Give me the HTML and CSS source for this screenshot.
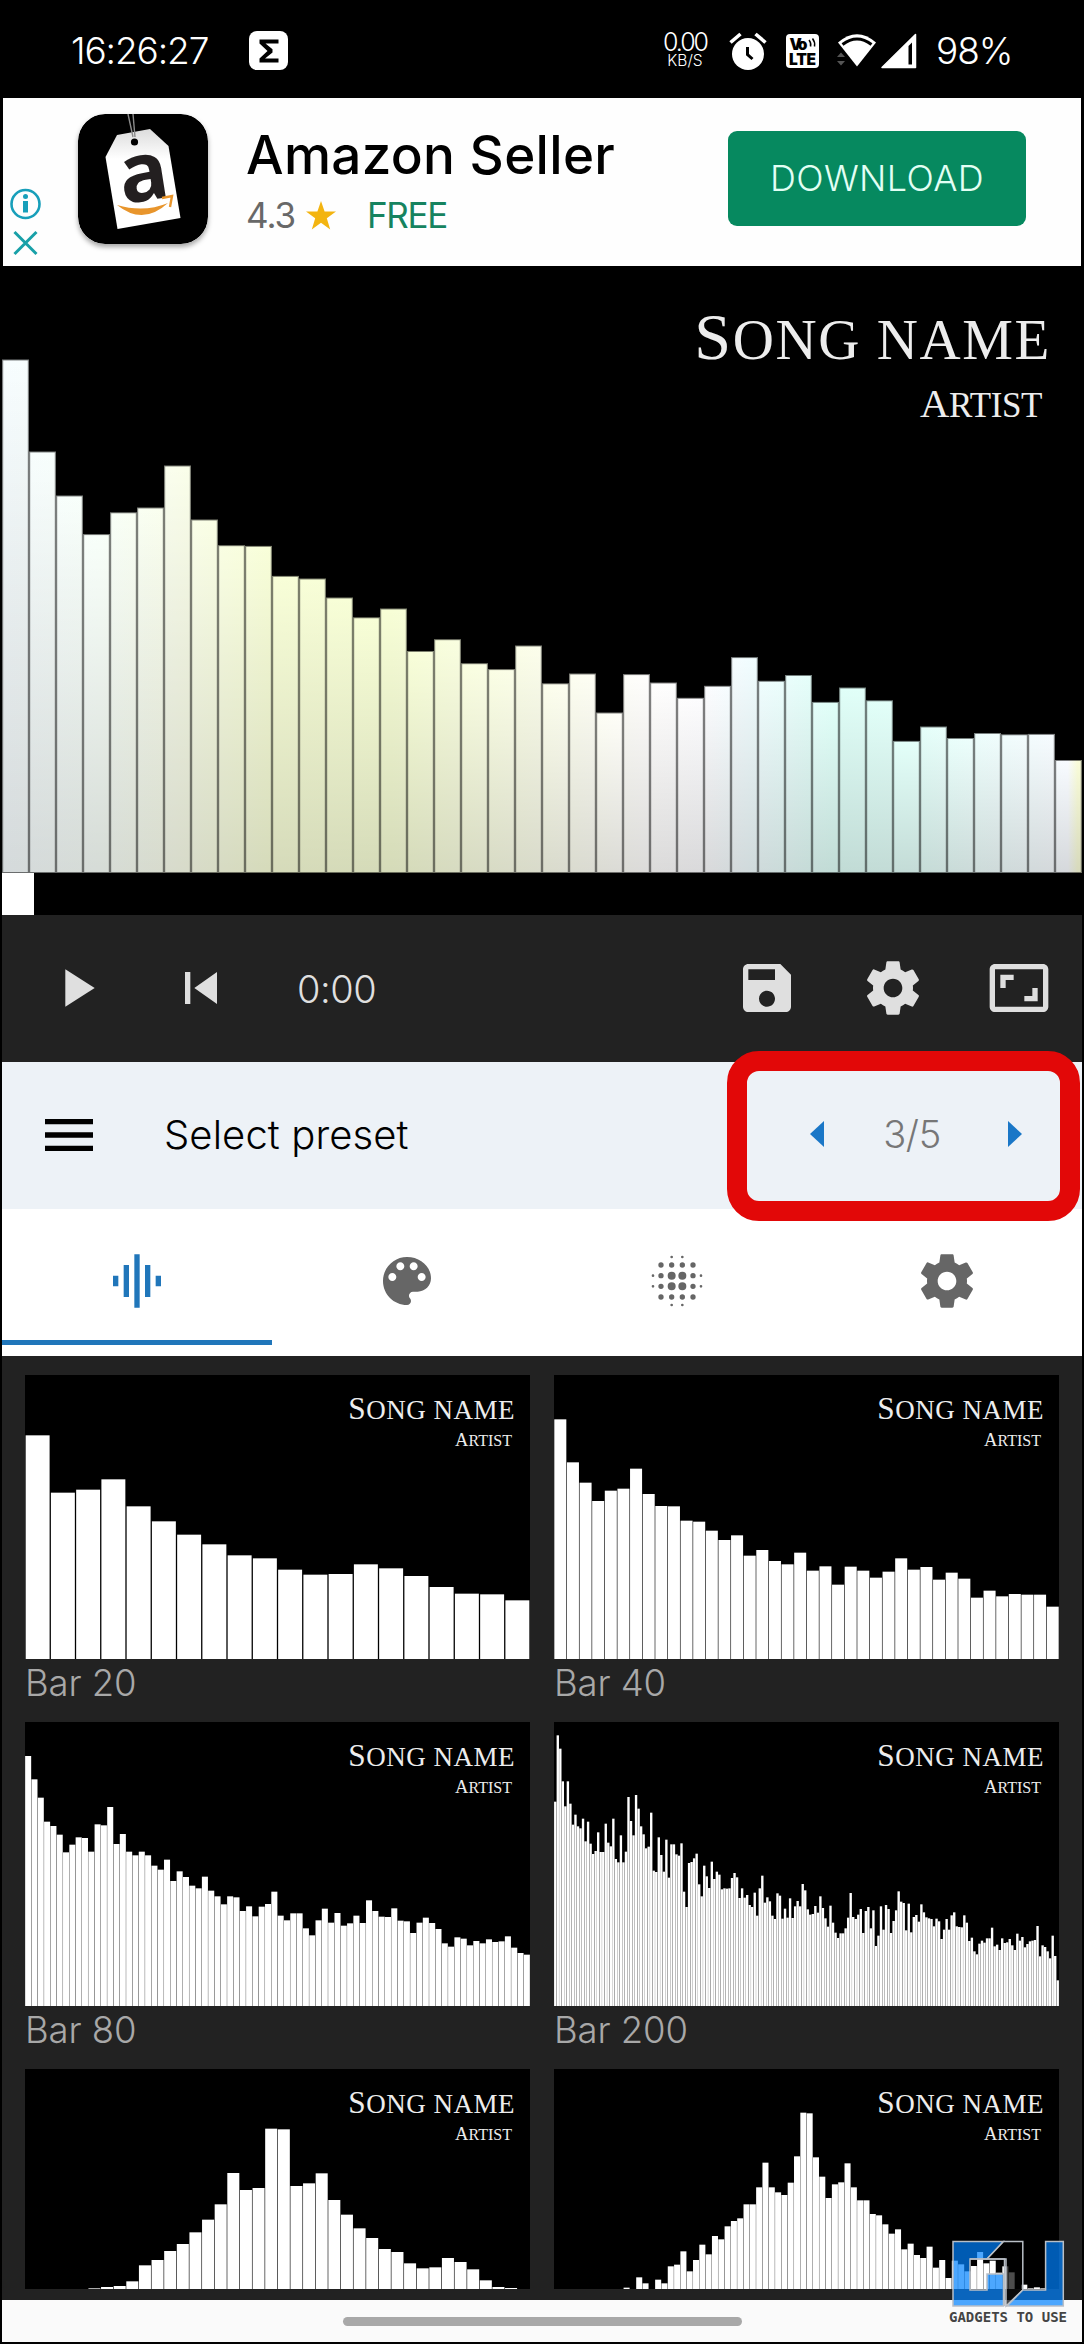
FILE: index.html
```html
<!DOCTYPE html>
<html lang="en">
<head>
<meta charset="utf-8">
<title>Select preset</title>
<link rel="stylesheet" href="styles.css">
</head>
<body>
<svg class="defs" width="0" height="0">
  <symbol id="gear" viewBox="0 0 24 24"><path d="M19.43 12.98c.04-.32.07-.64.07-.98s-.03-.66-.07-.98l2.11-1.65c.19-.15.24-.42.12-.64l-2-3.46c-.12-.22-.39-.3-.61-.22l-2.49 1c-.52-.4-1.08-.73-1.69-.98l-.38-2.65C14.46 2.18 14.25 2 14 2h-4c-.25 0-.46.18-.49.42l-.38 2.65c-.61.25-1.17.59-1.69.98l-2.49-1c-.23-.09-.49 0-.61.22l-2 3.46c-.13.22-.07.49.12.64l2.11 1.65c-.04.32-.07.65-.07.98s.03.66.07.98l-2.11 1.65c-.19.15-.24.42-.12.64l2 3.46c.12.22.39.3.61.22l2.49-1c.52.4 1.08.73 1.69.98l.38 2.65c.03.24.24.42.49.42h4c.25 0 .46-.18.49-.42l.38-2.65c.61-.25 1.17-.59 1.69-.98l2.49 1c.23.09.49 0 .61-.22l2-3.46c.12-.22.07-.49-.12-.64l-2.11-1.65zM12 15.5c-1.93 0-3.5-1.57-3.5-3.5s1.57-3.5 3.5-3.5 3.5 1.57 3.5 3.5-1.57 3.5-3.5 3.5z"/></symbol>
</svg>
<div class="phone">
  <header class="status">
    <span class="clock">16:26:27</span>
    <svg class="sigma" viewBox="0 0 40 40"><rect width="39" height="39" rx="8" fill="#fff"/><path d="M29.500 8.500V12.500H16.500L23.500 18.200V21.500L16 27.500H29.500V31.500H10.500V27.500L18.500 20L10.500 12.500V8.500Z" fill="#000"/></svg>
    <span class="rate"><span class="rate-num">0.00</span><span class="rate-unit">KB/S</span></span>
    <svg class="alarm" viewBox="0 0 38 38"><circle cx="19" cy="22" r="16" fill="#fff"/><path d="M1.500 10.500L11.500 2M36.500 10.500L26.500 2" stroke="#fff" stroke-width="3.600"/><path d="M18.500 15V22.500L23.500 27" stroke="#000" stroke-width="3" fill="none"/></svg>
    <svg class="volte" viewBox="0 0 33 34"><rect width="33" height="34" rx="4" fill="#fff"/><text x="3.500" y="15.500" textLength="18">Vo</text><text x="3" y="30.500" textLength="27">LTE</text><path d="M23 6Q25.500 9 24.500 12.500M26.500 4.500Q29.500 8.500 28.500 12.500" fill="none" stroke="#000" stroke-width="1.500"/></svg>
    <svg class="wifi" viewBox="0 0 40 36"><path d="M1 9.500Q20-7 39 9.500L20 33.500Z" fill="#fff"/><path d="M5.500 11.500Q20 .500 34.500 11.500" fill="none" stroke="#000" stroke-width="3"/><path d="M0 24L4 19.500 8 24ZM0 28H8L4 32.500Z" fill="#555"/></svg>
    <svg class="signal" viewBox="0 0 36 36"><path d="M1 34.500L34.500 1.500V34.500Z" fill="#fff" stroke="#fff" stroke-width="1.500" stroke-linejoin="round"/><path d="M27.500 13L31 9.500V31.500H27.500Z" fill="#000"/></svg>
    <span class="battery">98%</span>
  </header>

  <section class="ad">
    <div class="adchoices">
      <svg width="32" height="32" viewBox="0 0 32 32"><circle cx="15.500" cy="16" r="14" fill="none" stroke="#189fba" stroke-width="2.600"/><circle cx="15.500" cy="8.500" r="2.500" fill="#189fba"/><path d="M13 13H18V24.500H13Z" fill="#189fba"/></svg>
      <svg width="32" height="28" viewBox="0 0 32 28"><path d="M4.500 4L26.500 26M26.500 4L4.500 26" stroke="#18a0a8" stroke-width="3"/></svg>
    </div>
    <svg class="app-icon" viewBox="0 0 130 130">
      <defs><linearGradient id="tag" x1="0" y1="0" x2="0" y2="1"><stop offset="0" stop-color="#dcdcdc"/><stop offset=".3" stop-color="#fff"/></linearGradient></defs>
      <rect width="130" height="130" rx="27" fill="#000"/>
      <path d="M39 21L72 15L90.500 32L102.500 104L39.500 115L27.500 43Z" fill="url(#tag)"/>
      <path d="M50 0L55 23M55 0L57 23" stroke="#8a8a8a" stroke-width="1.400"/>
      <circle cx="56.500" cy="28" r="3.600" fill="#000"/>
      <text x="42" y="87" transform="rotate(-9 64 70)" class="app-letter">a</text>
      <path d="M39 91Q65 112 90 89Q66 99 39 91Z" fill="#e8952c"/>
      <path d="M84 84L94 82L92 93" fill="none" stroke="#e8952c" stroke-width="2.400"/>
    </svg>
    <div class="ad-copy">
      <div class="ad-title">Amazon Seller</div>
      <div class="ad-meta"><span>4.3</span><svg width="30" height="29" viewBox="0 0 30 29"><path d="M15 0L18.600 10.500H30L20.800 17.200L24.200 28.500L15 21.700L5.800 28.500L9.200 17.200L0 10.500H11.400Z" fill="#f3b410"/></svg><span class="free">FREE</span></div>
    </div>
    <button class="download">DOWNLOAD</button>
  </section>

  <section class="preview">
    <svg class="bars" data-chart="preview" viewBox="0 0 1080 607" preserveAspectRatio="none">
      <defs>
        <linearGradient id="hue" gradientUnits="userSpaceOnUse" x1="0" y1="0" x2="1080" y2="0">
          <stop offset="0" stop-color="#f7fdff"/><stop offset=".09" stop-color="#f8fff9"/><stop offset=".16" stop-color="#fafeec"/><stop offset=".25" stop-color="#f8fed8"/><stop offset=".36" stop-color="#f7fed6"/><stop offset=".5" stop-color="#fcfeec"/><stop offset=".6" stop-color="#fffefd"/><stop offset=".65" stop-color="#fcfcfe"/><stop offset=".69" stop-color="#f2fdff"/><stop offset=".77" stop-color="#e0fff8"/><stop offset=".84" stop-color="#e3fff9"/><stop offset=".9" stop-color="#edfefc"/><stop offset=".987" stop-color="#f8fbff"/><stop offset=".996" stop-color="#f9fcd9"/><stop offset="1" stop-color="#f9fcd9"/>
        </linearGradient>
        <linearGradient id="shade" x1="0" y1="0" x2="0" y2="1"><stop offset="0" stop-color="#000" stop-opacity="0"/><stop offset="1" stop-color="#000" stop-opacity=".14"/></linearGradient>
      </defs>
    </svg>
    <div class="caption"><div class="song">SONG NAME</div><div class="artist">ARTIST</div></div>
    <div class="progress"><div class="progress-fill"></div></div>
  </section>

  <section class="controls">
    <svg class="icon" viewBox="0 0 24 24"><path d="M8 5v14l11-7z"/></svg>
    <svg class="icon previous" viewBox="0 0 24 24"><path d="M6 6h2v12H6zm3.500 6l8.500 6V6z"/></svg>
    <span class="time">0:00</span>
    <svg class="icon save" viewBox="0 0 24 24"><path fill-rule="evenodd" d="M17 3H5c-1.110 0-2 .9-2 2v14c0 1.100.89 2 2 2h14c1.100 0 2-.9 2-2V7l-4-4zM12 19c-1.660 0-3-1.340-3-3s1.340-3 3-3 3 1.340 3 3-1.340 3-3 3zm3-10H5V5h10v4z"/></svg>
    <svg class="icon"><use href="#gear"/></svg>
    <svg class="icon" viewBox="0 0 24 24"><path d="M19 12h-2v3h-3v2h5v-5zM7 9h3V7H5v5h2V9zm14-6H3c-1.100 0-2 .9-2 2v14c0 1.100.9 2 2 2h18c1.100 0 2-.9 2-2V5c0-1.100-.9-2-2-2zm0 16.010H3V4.990h18v14.020z"/></svg>
  </section>

  <section class="preset-bar">
    <svg class="icon" viewBox="0 0 24 24"><path d="M3 18h18v-2H3v2zm0-5h18v-2H3v2zm0-7v2h18V6H3z"/></svg>
    <span class="preset-title">Select preset</span>
    <div class="pager">
      <svg width="14" height="26" viewBox="0 0 14 26"><path d="M14 0V26L0 13Z"/></svg>
      <span>3/5</span>
      <svg width="14" height="26" viewBox="0 0 14 26"><path d="M0 0V26L14 13Z"/></svg>
    </div>
  </section>

  <nav class="tabs">
    <div class="tab active"><svg class="icon" viewBox="0 0 24 24"><path d="M7 18h2V6H7v12zm4 4h2V2h-2v20zm-8-8h2v-4H3v4zm12 4h2V6h-2v12zm4-8v4h2v-4h-2z"/></svg></div>
    <div class="tab"><svg class="icon" viewBox="0 0 24 24"><path d="M12 3c-4.970 0-9 4.030-9 9s4.030 9 9 9c.83 0 1.500-.67 1.500-1.500 0-.39-.15-.74-.39-1.010-.23-.26-.38-.61-.38-.99 0-.83.67-1.500 1.500-1.500H16c2.760 0 5-2.240 5-5 0-4.420-4.030-8-9-8zm-5.500 9c-.83 0-1.500-.67-1.500-1.500S5.670 9 6.500 9 8 9.670 8 10.500 7.330 12 6.500 12zm3-4C8.670 8 8 7.330 8 6.500S8.670 5 9.500 5s1.500.67 1.500 1.500S10.330 8 9.500 8zm5 0c-.83 0-1.500-.67-1.500-1.500S13.670 5 14.500 5s1.500.67 1.500 1.500S15.330 8 14.500 8zm3 4c-.83 0-1.500-.67-1.500-1.500S16.670 9 17.500 9s1.500.67 1.500 1.500-.67 1.500-1.500 1.500z"/></svg></div>
    <div class="tab"><svg class="icon dots" viewBox="0 0 24 24"><path stroke-width="3" d="M10 10h0M14 10h0M10 14h0M14 14h0"/><path stroke-width="2" d="M6 6h0M10 6h0M14 6h0M18 6h0M6 10h0M18 10h0M6 14h0M18 14h0M6 18h0M10 18h0M14 18h0M18 18h0"/><path stroke-width="1" d="M10 3h0M14 3h0M3 10h0M3 14h0M21 10h0M21 14h0M10 21h0M14 21h0"/></svg></div>
    <div class="tab"><svg class="icon"><use href="#gear"/></svg></div>
  </nav>

  <main class="presets">
    <div class="grid">
      <article class="preset"><div class="thumb"><svg class="bars" data-chart="bar20"></svg><div class="caption"><div class="song">SONG NAME</div><div class="artist">ARTIST</div></div></div><div class="label">Bar 20</div></article>
      <article class="preset"><div class="thumb"><svg class="bars" data-chart="bar40"></svg><div class="caption"><div class="song">SONG NAME</div><div class="artist">ARTIST</div></div></div><div class="label">Bar 40</div></article>
      <article class="preset"><div class="thumb"><svg class="bars" data-chart="bar80"></svg><div class="caption"><div class="song">SONG NAME</div><div class="artist">ARTIST</div></div></div><div class="label">Bar 80</div></article>
      <article class="preset"><div class="thumb"><svg class="bars" data-chart="bar200"></svg><div class="caption"><div class="song">SONG NAME</div><div class="artist">ARTIST</div></div></div><div class="label">Bar 200</div></article>
      <article class="preset"><div class="thumb"><svg class="bars" data-chart="center40"></svg><div class="caption"><div class="song">SONG NAME</div><div class="artist">ARTIST</div></div></div></article>
      <article class="preset"><div class="thumb"><svg class="bars" data-chart="center80"></svg><div class="caption"><div class="song">SONG NAME</div><div class="artist">ARTIST</div></div></div></article>
    </div>
  </main>

  <footer class="gesture"><div class="handle"></div></footer>

  <div class="watermark">
    <svg width="114" height="68" viewBox="951 2240 114 68">
      <g stroke="#b9bfc6" stroke-width="1.500">
        <path fill="#0081ff" fill-opacity=".7" d="M953 2241.500H1003.500L987 2259H970V2290H987V2274H1003.500V2306H953Z"/>
        <path fill="#000" fill-opacity=".7" d="M1003.500 2241.500H1022.800V2290L1006 2306V2259H987Z"/>
        <path fill="#0081ff" fill-opacity=".7" d="M1045.600 2241.500H1063.300V2306H1007L1022.800 2290H1045.600Z"/>
        <path fill="none" d="M970 2259H1004.500V2306"/>
      </g>
    </svg>
    <div class="watermark-text">GADGETS TO USE</div>
  </div>
</div>
<script src="script.js"></script>
</body>
</html>
```
FILE: styles.css
```css
* { box-sizing: border-box; }
body { margin: 0; background: #000; font-family: Inter, "Liberation Sans", sans-serif; font-weight: 300; }
.defs { position: absolute; }
.phone { position: relative; width: 1084px; height: 2344px; padding: 0 2px; overflow: hidden; background: #000; display: flex; flex-direction: column; }
svg { display: block; flex: none; }
.icon { width: 64px; height: 64px; fill: currentColor; }

/* status bar */
.status { height: 98px; flex: none; display: flex; align-items: center; padding: 3px 70px 0 69px; color: #fff; }
.clock, .battery { font-size: 37px; line-height: 40px; letter-spacing: -1.1px; }
.clock { width: 178px; white-space: nowrap; }
.sigma { width: 40px; height: 40px; margin-right: auto; }
.rate { width: 50px; display: flex; flex-direction: column; align-items: center; margin-right: 19px; }
.rate-num { font-size: 25px; line-height: 20px; letter-spacing: -2px; }
.rate-unit { font-size: 15.500px; line-height: 17px; }
.alarm { width: 38px; height: 38px; margin-right: 19px; }
.volte { width: 33px; height: 34px; margin-right: 18px; font: 900 15.500px Inter, sans-serif; }
.wifi { width: 40px; height: 36px; margin-right: 4px; }
.signal { width: 36px; height: 36px; margin-right: 19px; }
.battery { width: 76px; white-space: nowrap; }

/* ad banner */
.ad { height: 168px; flex: none; margin: 0 1px; background: #fefefe; display: flex; position: relative; }
.adchoices { width: 75px; padding: 90px 0 0 7px; display: flex; flex-direction: column; gap: 8px; }
.app-icon { width: 130px; height: 130px; margin-top: 16px; border-radius: 27px; box-shadow: 0 3px 5px rgba(0,0,0,.35); }
.app-letter { font: 700 82px "Open Sans", sans-serif; fill: #231f20; }
.ad-copy { margin-left: 38px; padding-top: 24px; }
.ad-title { font-size: 53px; line-height: 66px; font-weight: 500; letter-spacing: .3px; color: #000; white-space: nowrap; }
.ad-meta { display: flex; align-items: center; font-size: 35px; line-height: 52px; font-weight: 400; color: #686868; margin-top: 1px; }
.ad-meta span { width: 60px; letter-spacing: -1px; }
.ad-meta .free { width: auto; margin-left: 31px; color: #16835f; letter-spacing: -1.3px; }
.download { width: 298px; height: 95px; margin: 33px 55px 0 auto; border: 0; border-radius: 9px; background: #06895f; color: #e2fff4; font: 300 36px Inter, sans-serif; letter-spacing: .4px; padding: 0 0 2px; }

/* preview */
.preview { height: 649px; flex: none; position: relative; display: flex; flex-direction: column; }
.preview .bars { width: 1080px; height: 607px; }
.progress { height: 42px; }
.progress-fill { width: 32px; height: 42px; background: #fff; }
.caption { position: absolute; display: flex; flex-direction: column; align-items: flex-end; font-family: "Liberation Serif", serif; font-weight: 400; color: #ededed; white-space: nowrap; }
.song::first-letter, .artist::first-letter { font-size: 1.160em; }
.preview .caption { top: 49px; right: 31px; }
.preview .song { font-size: 57px; line-height: 44px; letter-spacing: 1.600px; }
.preview .artist { font-size: 35px; line-height: 36px; letter-spacing: -.4px; margin: 24px 9px 0 0; }
.thumb .caption { top: 18px; right: 15px; }
.thumb .song { font-size: 27px; line-height: 32px; letter-spacing: .5px; }
.thumb .artist { font-size: 16px; line-height: 20px; letter-spacing: 0; margin: 4px 3px 0 0; }

/* transport controls */
.controls { height: 147px; flex: none; background: #222; color: #dfdfdf; display: flex; align-items: center; padding: 0 31px 2px 42px; }
.controls .previous { margin-left: 61px; }
.time { font-size: 38px; letter-spacing: -.5px; margin-left: 64px; padding-top: 2px; }
.controls .save { margin-left: auto; }
.controls .save ~ .icon { margin-left: 62px; }

/* preset bar */
.preset-bar { height: 147px; flex: none; background: #edf2f7; display: flex; align-items: center; padding: 0 2px 2px 35px; color: #000; }
.preset-title { font-size: 40px; margin-left: 63px; letter-spacing: .1px; }
.pager { width: 353px; height: 170px; margin: 3px 0 0 auto; border: 20px solid #e20808; border-radius: 32px; display: flex; align-items: center; padding: 0 38px 4px 63px; justify-content: space-between; position: relative; color: #777; fill: #1a77c7; font-size: 38px; }
.pager span { margin-right: 8px; letter-spacing: -.4px; }

/* tabs */
.tabs { height: 147px; flex: none; background: #fff; display: flex; color: #666; }
.tab { width: 270px; padding-top: 40px; display: flex; justify-content: center; }
.tab.active { color: #2076ba; background: linear-gradient(#2076ba, #2076ba) 0 131px / 100% 5px no-repeat; }
.dots path { stroke: currentColor; stroke-linecap: round; }

/* preset list */
.presets { height: 944px; flex: none; background: #222; padding-bottom: 11px; }
.grid { height: 933px; overflow: hidden; display: grid; grid-template-columns: 505px 505px; grid-auto-rows: 347px; column-gap: 24px; padding: 19px 23px 0; align-content: start; }
.thumb { height: 284px; background: #000; position: relative; }
.thumb .bars { width: 505px; height: 284px; fill: #fff; }
.label { font-size: 36.500px; line-height: 48px; letter-spacing: -.1px; color: #a8a8a8; }

/* gesture bar */
.gesture { height: 42px; flex: none; background: #fafafa; display: flex; align-items: center; justify-content: center; }
.handle { width: 399px; height: 9px; border-radius: 5px; background: #a8a8a8; }

.watermark { position: absolute; left: 949px; top: 2240px; width: 120px; }
.watermark svg { margin-left: 2px; }
.watermark-text { font: 700 14px/16px "DejaVu Sans Mono", monospace; color: #444; margin-top: 1px; white-space: nowrap; }
```
FILE: script.js
```js
// Each series lists bar tops, measured downwards; `floor` is the baseline on the same scale.
const HIDDEN = 909;
const charts = {
  preview: { width: 1080, height: 607, floor: 873, gap: 2.4, tops: [360,452,496,534.6,512.8,508,466,520,545.7,546.4,576.4,579,598,617.8,609,651.5,639.7,663.7,669.6,646,683.8,674,713,674.6,683,698.3,686.3,657.6,681.3,675.5,702.4,688,700.8,741.4,727,738.5,733.5,734.8,734.4,760.5] },
  bar20: { floor: 926, gap: 1.3, tops: [255,427,418,387,468,513,553,582,615,624,658,673,671,642,654,677,710,730,732,750] },
  bar40: { floor: 926, gap: .6, tops: [207,336,397,452,421,415,355,431,467,468,511,514,541,569,555,616,599,632,642,607,661,648,703,649,661,682,664,624,658,650,688,667,685,742,721,738,731,733,733,769] },
  bar80: { floor: 917, gap: .28, tops: [167,237,292,364,377,403,456,433,411,413,454,372,375,320,431,401,454,465,454,465,496,508,478,542,513,530,556,564,529,571,588,612,588,591,632,618,648,619,611,574,646,660,639,639,684,705,660,625,667,638,676,669,646,668,600,632,649,650,624,661,663,698,667,652,668,686,729,739,711,715,735,722,729,717,725,723,708,742,758,763] },
  bar200: { floor: 917, gap: .16, tops: [304,105,145,243,318,243,310,373,343,378,384,355,423,364,430,461,452,396,455,455,370,427,438,355,476,486,405,486,454,290,362,405,284,325,378,402,444,439,337,511,515,411,464,514,418,532,432,432,462,466,429,574,620,488,485,474,460,552,588,496,528,563,484,536,514,523,567,564,565,564,533,518,531,593,564,592,584,614,620,577,646,564,526,607,591,603,646,656,579,586,655,625,652,594,653,618,602,618,551,570,627,643,641,617,637,588,623,654,679,616,667,697,713,699,699,684,652,578,650,656,643,626,698,632,620,684,630,737,706,618,688,614,626,698,662,630,573,604,608,690,610,696,650,644,664,612,636,651,654,656,678,655,663,716,688,656,688,645,636,678,680,681,645,667,722,712,753,762,730,721,727,714,714,682,738,733,749,714,728,726,716,735,749,700,721,710,741,731,723,721,719,677,768,735,740,753,774,706,767,840] },
  center40: { floor: 909, gap: .6, tops: [HIDDEN,HIDDEN,HIDDEN,HIDDEN,HIDDEN,715,711,708,694,646,630,603,582,547,509,463,369,420,414,236,238,408,400,370,450,494,535,564,597,606,640,655,652,624,636,658,691,711,714,HIDDEN] },
  center80: { floor: 909, gap: .28, tops: [...Array(11).fill(HIDDEN),713,HIDDEN,682,700,HIDDEN,689,700,649,644,604,664,630,584,613,558,568,529,513,505,463,463,412,338,412,427,435,398,319,188,190,322,380,444,403,397,340,412,451,451,492,496,523,551,538,598,581,615,624,590,653,630,684,632,643,664,648,606,640,632,668,649,667,HIDDEN,704,715,712,715,HIDDEN,HIDDEN] }
};

function rect(svg, x, y, width, height, fill, opacity) {
  const el = document.createElementNS("http://www.w3.org/2000/svg", "rect");
  Object.entries({ x, y, width, height }).forEach(([k, v]) => el.setAttribute(k, v));
  if (fill) el.setAttribute("fill", fill);
  if (opacity) el.setAttribute("opacity", opacity);
  svg.append(el);
}

document.querySelectorAll("[data-chart]").forEach(svg => {
  const name = svg.dataset.chart;
  const { width = 505, height = 852, floor, gap, tops } = charts[name];
  svg.setAttribute("viewBox", `0 0 ${width} ${height}`);
  svg.setAttribute("preserveAspectRatio", "none");
  const pitch = width / tops.length;
  tops.forEach((top, i) => {
    const x = i * pitch, h = floor - top, y = height - h;
    if (name === "preview") {
      rect(svg, x, y - .5, pitch, h + .5, "url(#hue)", .5);
      rect(svg, x + gap / 2, y + .5, pitch - gap, h - 1.5, "url(#hue)");
      rect(svg, x, y, pitch, h, "url(#shade)");
    } else {
      rect(svg, x + gap / 2, y, pitch - gap, h);
    }
  });
});
```
